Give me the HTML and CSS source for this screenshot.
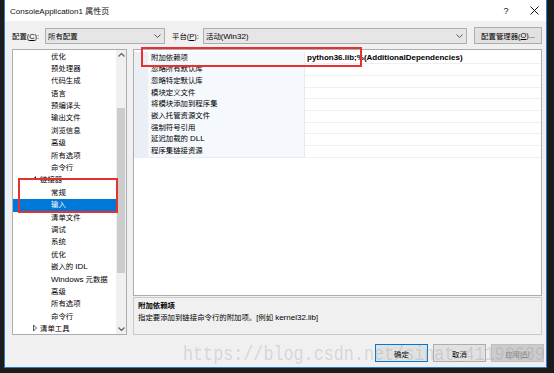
FILE: index.html
```html
<!DOCTYPE html>
<html>
<head>
<meta charset="utf-8">
<title>ConsoleApplication1 属性页</title>
<link rel="stylesheet" href="styles.css">
</head>
<body>
<div class="dialog">
  <div class="titlebar">
    <span class="title">ConsoleApplication1 属性页</span>
    <span class="tb-btn help">?</span>
    <span class="tb-btn close"><svg width="9" height="9" viewBox="0 0 9 9"><path d="M0.5 0.5 L8.5 8.5 M8.5 0.5 L0.5 8.5" stroke="#111" stroke-width="1" fill="none"/></svg></span>
  </div>
  <div class="body">
    <div class="config-row">
      <span class="lbl lbl-config">配置(<u>C</u>):</span>
      <div class="combo combo-config"><span>所有配置</span><svg class="chev" width="7" height="4" viewBox="0 0 7 4"><path d="M0.5 0.5 L3.5 3.5 L6.5 0.5" stroke="#555" fill="none"/></svg></div>
      <span class="lbl lbl-platform">平台(<u>P</u>):</span>
      <div class="combo combo-platform"><span>活动(<span class="lat">Win32</span>)</span><svg class="chev" width="7" height="4" viewBox="0 0 7 4"><path d="M0.5 0.5 L3.5 3.5 L6.5 0.5" stroke="#555" fill="none"/></svg></div>
      <button class="btn btn-manager">配置管理器(<u>O</u>)...</button>
    </div>
    <div class="main">
      <div class="tree">
        <ul class="tree-list">
          <li class="ti">优化</li>
          <li class="ti">预处理器</li>
          <li class="ti">代码生成</li>
          <li class="ti">语言</li>
          <li class="ti">预编译头</li>
          <li class="ti">输出文件</li>
          <li class="ti">浏览信息</li>
          <li class="ti">高级</li>
          <li class="ti">所有选项</li>
          <li class="ti">命令行</li>
          <li class="ti l1"><svg class="tri" width="8" height="8" viewBox="0 0 8 8"><polygon points="5,1 5,5 1,5" fill="#111"/></svg>链接器</li>
          <li class="ti">常规</li>
          <li class="ti selected">输入</li>
          <li class="ti">清单文件</li>
          <li class="ti">调试</li>
          <li class="ti">系统</li>
          <li class="ti">优化</li>
          <li class="ti">嵌入的 <span class="lat">IDL</span></li>
          <li class="ti"><span class="lat">Windows</span> 元数据</li>
          <li class="ti">高级</li>
          <li class="ti">所有选项</li>
          <li class="ti">命令行</li>
          <li class="ti l1"><svg class="tri" width="8" height="8" viewBox="0 0 8 8"><polygon points="2.5,1 5.5,4 2.5,7" fill="none" stroke="#444" stroke-width="0.9"/></svg>清单工具</li>
        </ul>
        <div class="scrollbar">
          <div class="sb-arrow"><svg width="7" height="4" viewBox="0 0 7 4"><path d="M0.5 3.5 L3.5 0.5 L6.5 3.5" stroke="#606060" fill="none" stroke-width="1.2"/></svg></div>
          <div class="sb-track"><div class="sb-thumb"></div></div>
          <div class="sb-arrow"><svg width="7" height="4" viewBox="0 0 7 4"><path d="M0.5 0.5 L3.5 3.5 L6.5 0.5" stroke="#606060" fill="none" stroke-width="1.2"/></svg></div>
        </div>
      </div>
      <div class="right">
        <div class="grid">
          <div class="row"><span class="mcell"></span><span class="kcell">附加依赖项</span><span class="vcell"><span class="lat">python36.lib;%(AdditionalDependencies)</span></span></div>
          <div class="row"><span class="mcell"></span><span class="kcell">忽略所有默认库</span><span class="vcell"></span></div>
          <div class="row"><span class="mcell"></span><span class="kcell">忽略特定默认库</span><span class="vcell"></span></div>
          <div class="row"><span class="mcell"></span><span class="kcell">模块定义文件</span><span class="vcell"></span></div>
          <div class="row"><span class="mcell"></span><span class="kcell">将模块添加到程序集</span><span class="vcell"></span></div>
          <div class="row"><span class="mcell"></span><span class="kcell">嵌入托管资源文件</span><span class="vcell"></span></div>
          <div class="row"><span class="mcell"></span><span class="kcell">强制符号引用</span><span class="vcell"></span></div>
          <div class="row"><span class="mcell"></span><span class="kcell">延迟加载的 <span class="lat">DLL</span></span><span class="vcell"></span></div>
          <div class="row"><span class="mcell"></span><span class="kcell">程序集链接资源</span><span class="vcell"></span></div>
        </div>
        <div class="desc">
          <div class="desc-title">附加依赖项</div>
          <div class="desc-text">指定要添加到链接命令行的附加项。[例如 <span class="lat">kernel32.lib</span>]</div>
        </div>
      </div>
    </div>
    <div class="buttons">
      <button class="btn btn-ok">确定</button>
      <button class="btn">取消</button>
      <button class="btn btn-disabled">应用(<u>A</u>)</button>
    </div>
  </div>
  <div class="annot annot-tree"></div>
  <div class="annot annot-grid"></div>
  <div class="watermark">https://blog.csdn.net/sinat_41190639</div>
</div>
</body>
</html>
```
FILE: styles.css
```css
* { box-sizing: border-box; margin: 0; padding: 0; }
html, body { width: 554px; height: 373px; overflow: hidden; }
body {
  background: #1c1c1d;
  font-family: "Liberation Sans", "Noto Sans CJK SC", sans-serif;
  font-size: 7.4px;
  color: #000;
  padding-left: 4px;
}
.lat { font-size: 8px; }
u { text-decoration: underline; text-underline-offset: 1px; }

.dialog {
  position: relative;
  width: 543px;
  height: 368px;
  border: 1px solid #2b7bd0;
  border-top: none;
  background: #f0f0f0;
  display: flex;
  flex-direction: column;
}

.titlebar {
  height: 21px;
  background: #fff;
  display: flex;
  align-items: center;
  padding-left: 5px;
  font-size: 8px;
  color: #111;
}
.title { flex: 1; }
.tb-btn { width: 24px; height: 21px; display: flex; align-items: center; justify-content: center; }
.help { margin-right: 4px; font-size: 9px; }

.body {
  flex: 1;
  display: flex;
  flex-direction: column;
  padding: 6px 4px 0 7px;
}

.config-row { height: 17px; display: flex; align-items: center; }
.lbl { white-space: nowrap; }
.lbl-config { width: 33px; }
.lbl-platform { width: 31px; margin-left: 7px; }
.combo {
  height: 16px;
  border: 1px solid #adadad;
  background: #e6e6e6;
  display: flex;
  align-items: center;
  justify-content: space-between;
  padding: 0 3px 0 2px;
}
.combo-config { width: 120px; }
.combo-platform { width: 264px; }
.btn {
  font-family: inherit;
  font-size: 7.4px;
  color: #000;
  background: #e1e1e1;
  border: 1px solid #adadad;
  height: 18px;
  width: 53px;
  display: flex;
  align-items: center;
  justify-content: center;
}
.btn-manager { width: 68px; height: 17px; margin-left: 7px; }

.main { margin-top: 5px; height: 286px; display: flex; gap: 6px; }

.tree {
  width: 115px;
  border: 1px solid #abadb3;
  background: #fff;
  display: flex;
  overflow: hidden;
}
.tree-list { flex: 1; list-style: none; padding-top: 0.5px; overflow: hidden; }
.ti {
  display: block;
  height: 12.4px;
  line-height: 12.4px;
  padding-left: 38px;
  white-space: nowrap;
}
.ti.l1 { padding-left: 18px; }
.tri { display: inline-block; vertical-align: -1px; margin-right: 1px; }
.ti.selected { background: #0078d7; color: #fff; }

.scrollbar { width: 10px; background: #f0f0f0; display: flex; flex-direction: column; }
.sb-arrow { height: 10px; display: flex; align-items: center; justify-content: center; }
.sb-track { flex: 1; padding-top: 48px; display: flex; flex-direction: column; }
.sb-thumb { height: 165px; margin: 0 1px; background: #cdcdcd; }

.right { width: 409px; display: flex; flex-direction: column; gap: 1px; }
.grid {
  flex: 1;
  border: 1px solid #abadb3;
  background: #fff;
  padding-top: 1.5px;
}
.row {
  height: 11.7px;
  display: grid;
  grid-template-columns: 14px 157px 1fr;
  line-height: 11.7px;
}
.mcell { background: #eaeff6; }
.kcell {
  background: #f5f8fc;
  border-bottom: 1px solid #e9edf3;
  padding-left: 3px;
  white-space: nowrap;
  border-right: 1px solid #e6e9ee;
}
.vcell {
  border-bottom: 1px solid #efefef;
  padding-left: 2px;
  font-weight: bold;
  white-space: nowrap;
}

.desc {
  height: 38px;
  border: 1px solid #c9c9c9;
  background: #f0f0f0;
  padding: 2px 4px 0 4px;
  line-height: 11.7px;
}
.desc-title { font-weight: bold; }

.buttons {
  margin-top: 9px;
  margin-right: -2px;
  height: 18px;
  display: flex;
  justify-content: flex-end;
  gap: 5px;
}
.btn-ok { border-color: #0078d7; }
.btn-disabled { background: #cccccc; border-color: #bfbfbf; color: #838383; }

.annot { position: absolute; border: 2px solid #e5312f; pointer-events: none; }
.annot-tree { left: 13px; top: 178px; width: 100px; height: 35px; }
.annot-grid { left: 136px; top: 47px; width: 221px; height: 20px; }

.watermark {
  position: absolute;
  left: 178px;
  top: 344.7px;
  font-family: "Liberation Mono", monospace;
  font-size: 20px;
  line-height: 20px;
  color: rgba(150, 150, 150, 0.3);
  white-space: nowrap;
  transform: scaleX(0.8375);
  transform-origin: left top;
  pointer-events: none;
}
```
